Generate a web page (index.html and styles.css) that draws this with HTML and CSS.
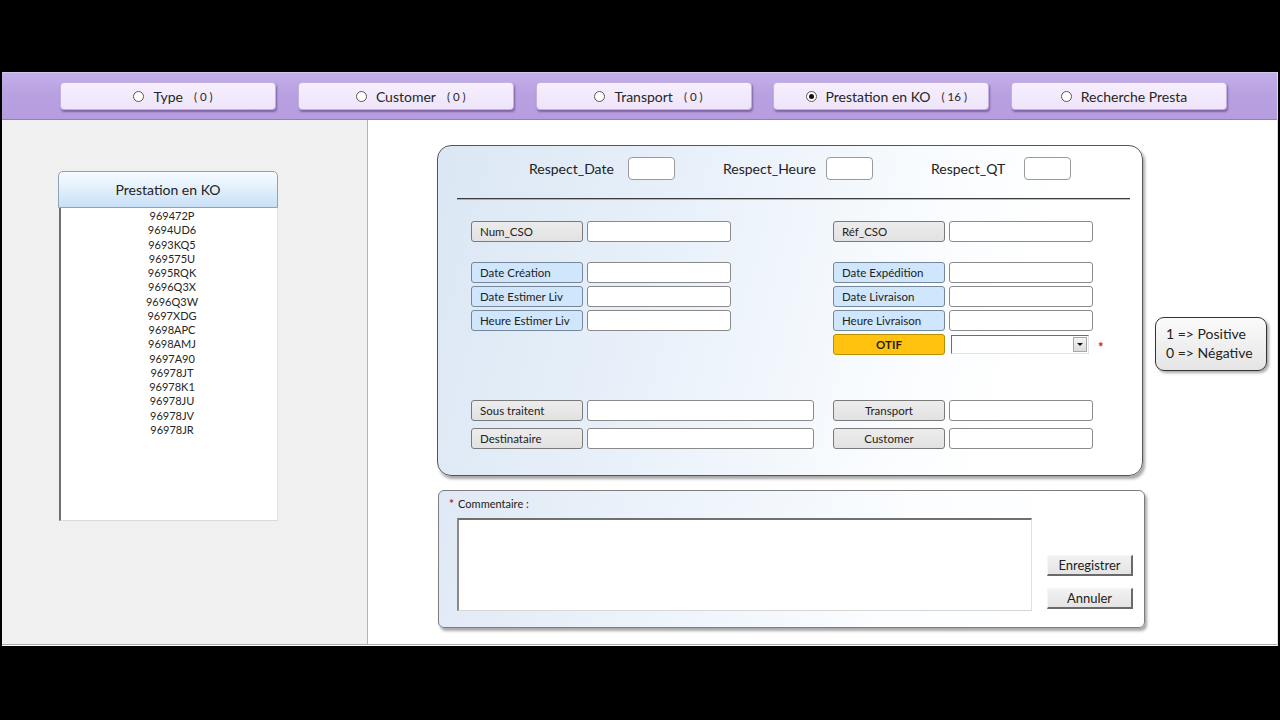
FILE: index.html
```html
<!DOCTYPE html>
<html lang="fr">
<head>
<meta charset="utf-8">
<title>Prestation en KO</title>
<link rel="stylesheet" href="styles.css">
</head>
<body>
<div class="app">
  <nav class="topbar">
    <div class="tab"><span class="radio"></span><span class="tab-label">Type</span><span class="count">( 0 )</span></div>
    <div class="tab"><span class="radio"></span><span class="tab-label">Customer</span><span class="count">( 0 )</span></div>
    <div class="tab"><span class="radio"></span><span class="tab-label">Transport</span><span class="count">( 0 )</span></div>
    <div class="tab"><span class="radio checked"></span><span class="tab-label">Prestation en KO</span><span class="count">( 16 )</span></div>
    <div class="tab"><span class="radio"></span><span class="tab-label">Recherche Presta</span></div>
  </nav>
  <div class="main">
    <aside class="side">
      <div class="list-head">Prestation en KO</div>
      <div class="list-body">
        <div class="item">969472P</div>
        <div class="item">9694UD6</div>
        <div class="item">9693KQ5</div>
        <div class="item">969575U</div>
        <div class="item">9695RQK</div>
        <div class="item">9696Q3X</div>
        <div class="item">9696Q3W</div>
        <div class="item">9697XDG</div>
        <div class="item">9698APC</div>
        <div class="item">9698AMJ</div>
        <div class="item">9697A90</div>
        <div class="item">96978JT</div>
        <div class="item">96978K1</div>
        <div class="item">96978JU</div>
        <div class="item">96978JV</div>
        <div class="item">96978JR</div>
      </div>
    </aside>
    <section class="content">
      <div class="forms">
        <div class="panel">
          <div class="respect">
            <span class="rlabel r1">Respect_Date</span><span class="rbox"></span>
            <span class="rlabel r2">Respect_Heure</span><span class="rbox"></span>
            <span class="rlabel r3">Respect_QT</span><span class="rbox"></span>
          </div>
          <div class="rule"></div>
          <div class="fields">
            <div class="sec">
              <div class="col col-l">
                <div class="row"><span class="lbl gray">Num_CSO</span><span class="inp"></span></div>
              </div>
              <div class="col">
                <div class="row"><span class="lbl gray">Réf_CSO</span><span class="inp"></span></div>
              </div>
            </div>
            <div class="sec sec-b">
              <div class="col col-l">
                <div class="row"><span class="lbl blue">Date Création</span><span class="inp"></span></div>
                <div class="row"><span class="lbl blue">Date Estimer Liv</span><span class="inp"></span></div>
                <div class="row"><span class="lbl blue">Heure Estimer Liv</span><span class="inp"></span></div>
              </div>
              <div class="col">
                <div class="row"><span class="lbl blue">Date Expédition</span><span class="inp"></span></div>
                <div class="row"><span class="lbl blue">Date Livraison</span><span class="inp"></span></div>
                <div class="row"><span class="lbl blue">Heure Livraison</span><span class="inp"></span></div>
                <div class="row"><span class="lbl otif">OTIF</span><span class="select"><span class="drop"><span class="tri"></span></span></span><span class="req">*</span></div>
              </div>
            </div>
            <div class="sec sec-c">
              <div class="col col-l">
                <div class="row"><span class="lbl gray">Sous traitent</span><span class="inp wide"></span></div>
                <div class="row"><span class="lbl gray">Destinataire</span><span class="inp wide"></span></div>
              </div>
              <div class="col">
                <div class="row"><span class="lbl gray center">Transport</span><span class="inp"></span></div>
                <div class="row"><span class="lbl gray center">Customer</span><span class="inp"></span></div>
              </div>
            </div>
          </div>
        </div>
        <div class="comment">
          <div class="c-label"><span class="c-star">*</span>Commentaire :</div>
          <div class="c-body">
            <div class="textarea"></div>
            <div class="buttons">
              <div class="btn">Enregistrer</div>
              <div class="btn">Annuler</div>
            </div>
          </div>
        </div>
      </div>
      <div class="legend">
        <div>1 =&gt; Positive</div>
        <div>0 =&gt; Négative</div>
      </div>
    </section>
  </div>
</div>
</body>
</html>
```

FILE: styles.css
```css
* { box-sizing: border-box; }
html, body { margin: 0; padding: 0; }
body {
  background: #000;
  width: 1280px;
  height: 720px;
  overflow: hidden;
  font-family: Lato, "Open Sans", "DejaVu Sans", sans-serif;
  color: #222;
}
.app {
  margin: 72px 2px 0 2px;
  width: 1276px;
  height: 574px;
  background: #fff;
  border-right: 1px solid #dcdcdc;
}
.topbar {
  height: 48px;
  background: linear-gradient(#c4aeea, #b9a0e1 50%, #b69ddf);
  border-top: 1px solid #d4c6ee;
  border-bottom: 1px solid #8d86a0;
  display: flex;
  gap: 21.75px;
  padding: 9px 0 0 58px;
}
.tab {
  width: 216px;
  height: 28px;
  background: linear-gradient(#f6effd, #efe4fa);
  border: 1px solid #c4b1e0;
  border-radius: 4px;
  box-shadow: 1px 2px 2px rgba(70, 40, 110, 0.5);
  display: flex;
  align-items: center;
  justify-content: center;
  font-size: 14px;
  color: #262626;
  padding-left: 10px;
}
.radio {
  width: 11px;
  height: 11px;
  border: 1px solid #555;
  border-radius: 50%;
  background: #fff;
  margin-right: 9px;
  display: flex;
  align-items: center;
  justify-content: center;
}
.radio.checked::after {
  content: "";
  width: 5px;
  height: 5px;
  border-radius: 50%;
  background: #111;
}
.count {
  margin-left: 11px;
  font-size: 11.5px;
}
.main {
  display: flex;
  height: 525px;
  border-bottom: 1px solid #a9a9a9;
}
.side {
  width: 366px;
  background: #f0f0f0;
  border-right: 1px solid #a7b3c6;
  padding: 51px 0 0 56px;
}
.list-head {
  width: 220px;
  height: 37px;
  border: 1px solid #8fa2b6;
  border-radius: 5px 5px 0 0;
  background: linear-gradient(#f6fbff, #e3f0fc 45%, #c8e0f6);
  font-size: 14px;
  display: flex;
  align-items: center;
  justify-content: center;
  color: #222;
}
.list-body {
  margin-left: 1px;
  width: 219px;
  height: 313px;
  background: #fff;
  border-left: 2px solid #707070;
  border-right: 1px solid #e2e2e2;
  border-bottom: 1px solid #dadada;
  padding: 1px 0 0 6px;
}
.item {
  font-size: 11px;
  line-height: 14.25px;
  text-align: center;
  color: #262626;
}
.content {
  flex: 1;
  display: flex;
  align-items: flex-start;
  padding: 25px 0 0 69px;
}
.forms {
  display: flex;
  flex-direction: column;
}
.panel {
  width: 706px;
  height: 331px;
  border: 1px solid #555;
  border-radius: 14px;
  background: linear-gradient(105deg, #dbe7f4 0%, #e9f1fa 35%, #f8fbfe 62%, #ffffff 80%);
  box-shadow: 2px 3px 3px rgba(0, 0, 0, 0.35);
  padding: 11px 12px 0 19px;
}
.respect {
  display: flex;
  align-items: center;
  height: 23px;
  font-size: 14px;
}
.rlabel { display: block; }
.r1 { width: 99px; margin-left: 72px; }
.r2 { width: 103px; margin-left: 48px; }
.r3 { width: 93px; margin-left: 58px; }
.rbox {
  width: 47px;
  height: 23px;
  background: #fff;
  border: 1px solid #9a9a9a;
  border-radius: 4px;
}
.rule {
  margin-top: 18px;
  height: 1px;
  background: #3d3d3d;
  box-shadow: 0 1px 0 rgba(0, 0, 0, 0.25);
}
.fields {
  margin-top: 22px;
  padding-left: 14px;
}
.sec { display: flex; }
.sec-b { margin-top: 20px; height: 93px; }
.sec-c { margin-top: 45px; }
.col {
  display: flex;
  flex-direction: column;
  gap: 3px;
}
.sec-c .col { gap: 7px; }
.col-l { width: 362px; }
.row {
  display: flex;
  align-items: center;
  gap: 4px;
  height: 21px;
}
.lbl {
  width: 112px;
  height: 21px;
  border: 1px solid #7a7a7a;
  border-radius: 3px;
  font-size: 11.5px;
  line-height: 19px;
  padding-left: 8px;
  color: #222;
  white-space: nowrap;
}
.lbl.gray { background: linear-gradient(#ececec, #e2e2e2); }
.lbl.blue { background: #cfe6fc; border-color: #75879a; }
.lbl.center { text-align: center; padding-left: 0; }
.lbl.otif {
  background: #ffc20e;
  border-color: #b98e00;
  font-weight: bold;
  text-align: center;
  padding-left: 0;
  color: #1e1e1e;
}
.inp {
  width: 144px;
  height: 21px;
  background: #fff;
  border: 1px solid #8a8a8a;
  border-radius: 3px;
}
.inp.wide { width: 227px; }
.select {
  margin-left: 2px;
  width: 138px;
  height: 19px;
  background: #fff;
  border-top: 1px solid #6d6d6d;
  border-left: 1px solid #6d6d6d;
  border-right: 1px solid #e3e3e3;
  border-bottom: 1px solid #e3e3e3;
  display: flex;
  justify-content: flex-end;
  align-items: center;
  padding-right: 1px;
}
.drop {
  width: 14px;
  height: 15px;
  background: linear-gradient(#f4f4f4, #dcdcdc);
  border: 1px solid #a8a8a8;
  display: flex;
  align-items: center;
  justify-content: center;
}
.tri {
  width: 0;
  height: 0;
  border-left: 3px solid transparent;
  border-right: 3px solid transparent;
  border-top: 3px solid #111;
}
.req {
  margin-left: 5px;
  color: #c0201f;
  font-size: 13px;
  font-weight: bold;
  line-height: 1;
  padding-top: 6px;
}
.comment {
  margin-top: 14px;
  margin-left: 1px;
  width: 707px;
  height: 138px;
  border: 1px solid #7d7d7d;
  border-radius: 6px;
  background: linear-gradient(105deg, #dfe9f5 0%, #eef4fb 35%, #fbfdff 65%, #ffffff 85%);
  box-shadow: 2px 3px 3px rgba(0, 0, 0, 0.35);
  padding: 6px 0 0 10px;
}
.c-label {
  font-size: 11px;
  line-height: 14px;
  height: 14px;
  color: #222;
}
.c-star {
  color: #c0201f;
  font-weight: bold;
  font-size: 12px;
  margin-right: 4px;
}
.c-body {
  display: flex;
  margin-top: 7px;
  margin-left: 8px;
}
.textarea {
  width: 575px;
  height: 93px;
  background: #fff;
  border-top: 2px solid #707070;
  border-left: 2px solid #8a8a8a;
  border-right: 1px solid #e0e0e0;
  border-bottom: 1px solid #d6d6d6;
}
.buttons {
  margin-left: 15px;
  display: flex;
  flex-direction: column;
  justify-content: flex-end;
  gap: 12px;
  padding-bottom: 2px;
}
.btn {
  width: 86px;
  height: 21px;
  background: linear-gradient(#f2f2f2, #e4e4e4);
  border-top: 1px solid #f6f6f6;
  border-left: 1px solid #f6f6f6;
  border-right: 2px solid #6a6a6a;
  border-bottom: 2px solid #6a6a6a;
  font-size: 13px;
  line-height: 18px;
  text-align: center;
  color: #222;
}
.legend {
  margin-left: 10px;
  margin-top: 172px;
  width: 112px;
  height: 54px;
  border: 1px solid #333;
  border-radius: 9px;
  background: linear-gradient(#fbfbfb, #e5e5e5);
  box-shadow: 2px 2px 3px rgba(0, 0, 0, 0.35);
  padding: 6px 0 0 10px;
  font-size: 14px;
  line-height: 19px;
  color: #222;
}
```
